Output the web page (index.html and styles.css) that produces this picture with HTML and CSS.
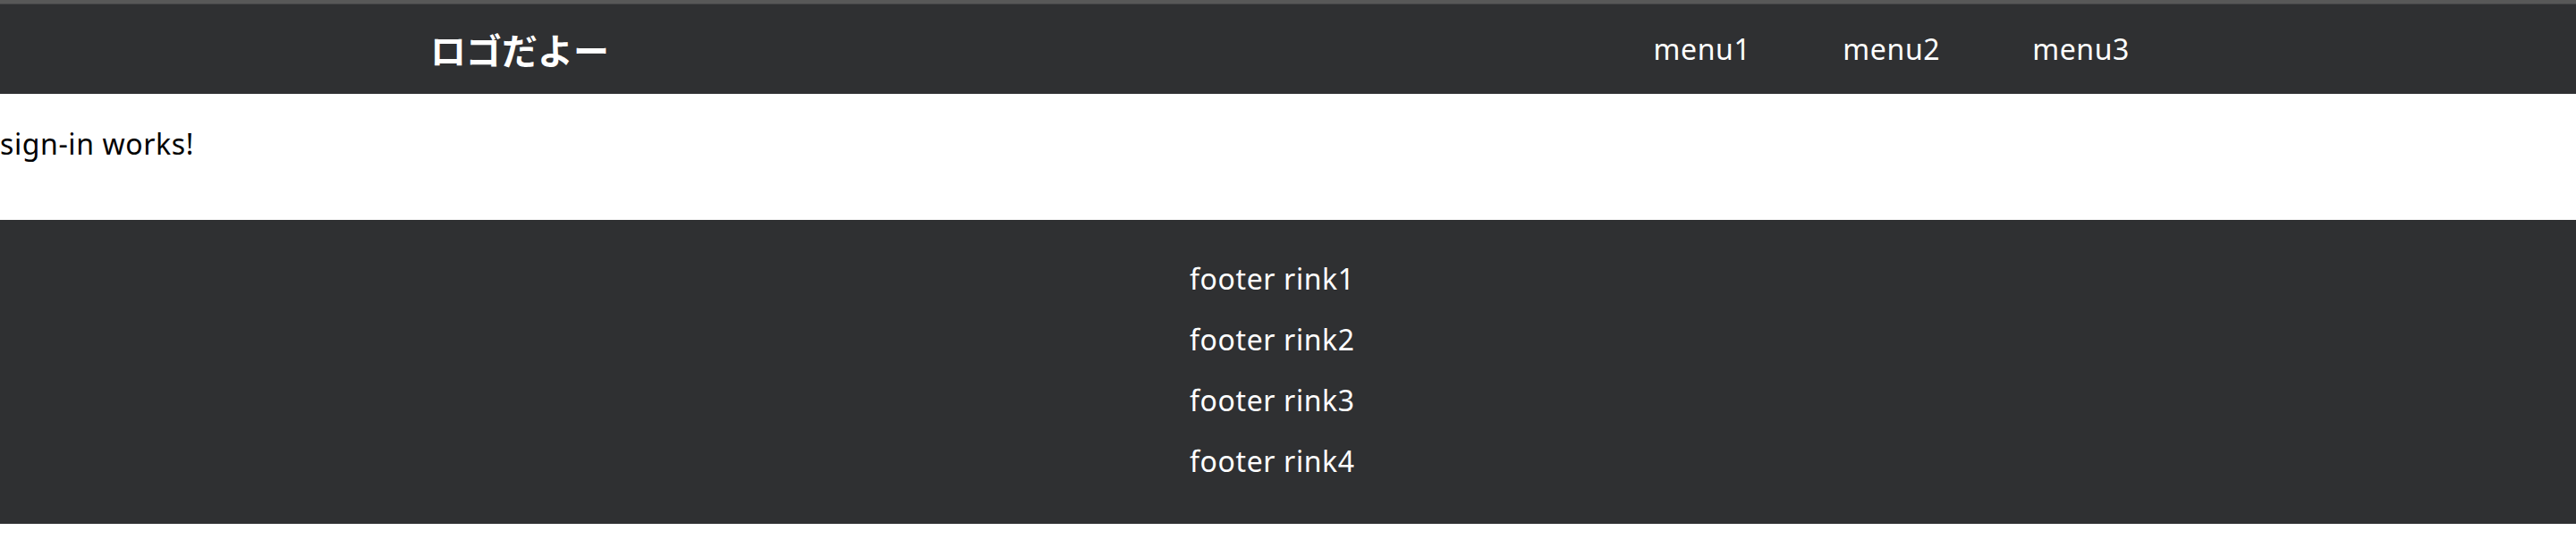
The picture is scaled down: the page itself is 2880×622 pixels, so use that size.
FILE: index.html
```html
<!DOCTYPE html>
<html lang="ja">
<head>
<meta charset="utf-8">
<title>sign-in</title>
<link rel="stylesheet" href="styles.css">
</head>
<body>
<header class="site-header">
  <div class="header-inner">
    <div class="logo">ロゴだよー</div>
    <nav class="nav">
      <ul class="nav-list">
        <li class="nav-item">menu1</li>
        <li class="nav-item">menu2</li>
        <li class="nav-item">menu3</li>
      </ul>
    </nav>
  </div>
</header>
<main class="main">
  <p class="message">sign-in works!</p>
</main>
<footer class="site-footer">
  <ul class="footer-list">
    <li class="footer-item">footer rink1</li>
    <li class="footer-item">footer rink2</li>
    <li class="footer-item">footer rink3</li>
    <li class="footer-item">footer rink4</li>
  </ul>
</footer>
</body>
</html>
```
FILE: styles.css
```css
html, body {
  margin: 0;
  padding: 0;
  background: #ffffff;
}
body {
  font-family: "Noto Sans", "Noto Sans CJK JP", sans-serif;
  font-size: 32px;
  letter-spacing: 0.6px;
  color: #000;
}
ul {
  list-style: none;
  margin: 0;
  padding: 0;
}
.site-header {
  background: #2f3032;
  border-top: 4px solid #585858;
  box-shadow: inset 0 1px 0 #444446;
  height: 105px;
  box-sizing: border-box;
  padding-top: 1px;
}
.header-inner {
  width: 1920px;
  margin: 0 auto;
  height: 100%;
  display: flex;
  justify-content: space-between;
  align-items: center;
}
.logo {
  color: #fff;
  font-family: "Noto Sans CJK JP", sans-serif;
  font-weight: 700;
  font-size: 40px;
  letter-spacing: 0;
  line-height: 1;
  padding-left: 1px;
}
.nav-list {
  display: flex;
  gap: 103px;
  padding-right: 19px;
}
.nav-item {
  color: #fff;
  font-size: 32px;
  line-height: 1;
}
.main {
  height: 141px;
  box-sizing: border-box;
  padding-top: 33px;
}
.message {
  margin: 0;
  line-height: 46px;
}
.site-footer {
  background: #2f3032;
  height: 340px;
  box-sizing: border-box;
  padding: 32px 0 36px;
  display: flex;
  justify-content: center;
}
.footer-list {
  width: 220px;
}
.footer-item {
  color: #fff;
  line-height: 68px;
}
```
